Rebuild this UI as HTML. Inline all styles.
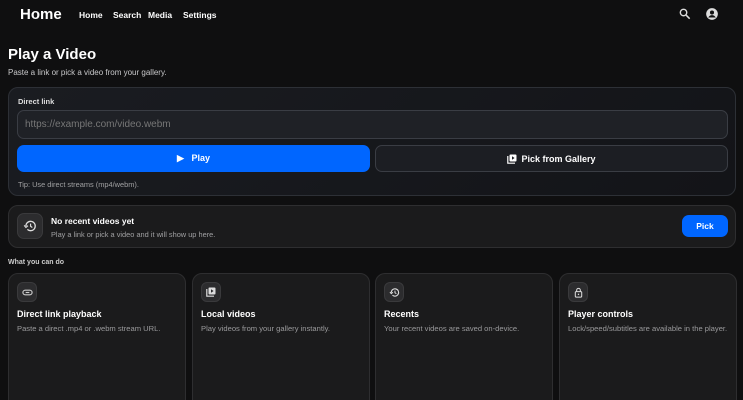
<!DOCTYPE html>
<html><head><meta charset="utf-8"><style>
*{box-sizing:border-box;margin:0;padding:0}
html,body{width:743px;height:400px;overflow:hidden}
body{background:#0f0f10;color:#fff;font-family:"Liberation Sans",sans-serif;position:relative}
.a{position:absolute}
.b{font-weight:bold}
.nav a{position:absolute;top:10px;font-size:8.5px;font-weight:bold;color:#fff}
.card{position:absolute;border:1px solid #2e2e30;border-radius:10px;background:#1b1b1c}
.ib{position:absolute;background:#2c2c2e;border:1px solid #3a3a3c;border-radius:7px;display:flex;align-items:center;justify-content:center}
.ft{position:absolute;top:273px;width:178px;height:140px}
.ft .ib{left:8px;top:8px;width:20px;height:20px;border-radius:6px}
.ft .t{position:absolute;left:8px;top:35px;font-size:9px;font-weight:bold}
.ft .d{position:absolute;left:8px;top:50px;font-size:7.6px;color:#9a9a9c}
</style></head><body>
<div class="a b" style="left:20px;top:6px;font-size:15px">Home</div>
<div class="nav"><a style="left:79px">Home</a><a style="left:113px">Search</a><a style="left:148px">Media</a><a style="left:183px">Settings</a></div>
<svg class="a" style="left:678px;top:7px" width="14" height="14" viewBox="0 0 24 24"><circle cx="9.5" cy="9.5" r="5.5" fill="none" stroke="#ddd" stroke-width="2.4"/><path d="M14 14l6 6" stroke="#ddd" stroke-width="2.6"/></svg>
<svg class="a" style="left:705px;top:7px" width="14" height="14" viewBox="0 0 24 24"><circle cx="12" cy="12" r="10" fill="#ddd"/><circle cx="12" cy="9.5" r="3.5" fill="#111"/><path d="M5.5 18c2-3 4-4 6.5-4s4.5 1 6.5 4" fill="#111"/></svg>
<div class="a b" style="left:8px;top:46px;font-size:15px">Play a Video</div>
<div class="a" style="left:8px;top:68px;font-size:8px;color:#c8c8ca">Paste a link or pick a video from your gallery.</div>
<div class="card" style="left:8px;top:87px;width:728px;height:109px;background:linear-gradient(135deg,#1a1c21,#131418);border-color:#2d3036">
<div class="a b" style="left:9px;top:9px;font-size:7.5px;color:#ddd">Direct link</div>
<div class="a" style="left:8px;top:22px;width:711px;height:29px;border:1px solid #3a3d44;border-radius:7px;background:#1f2126;font-size:10px;color:#777;padding:8px 7px">https://example.com/video.webm</div>
<div class="a b" style="left:8px;top:57px;width:353px;height:27px;border-radius:7px;background:#0066ff;font-size:9px;display:flex;align-items:center;justify-content:center">&#9654;&nbsp;&nbsp; Play</div>
<div class="a b" style="left:366px;top:57px;width:353px;height:27px;border-radius:7px;background:#1c1e23;border:1px solid #3a3d44;font-size:9px;display:flex;align-items:center;justify-content:center"><svg width="10" height="10" viewBox="0 0 10 10" style="margin-right:4px"><rect x="2.5" y="0.5" width="7" height="7" rx="1" fill="#fff"/><path d="M5 2.3v3.4l2.6-1.7z" fill="#1c1e23"/><path d="M0.8 2v7.2h7.2" stroke="#fff" stroke-width="1.2" fill="none"/></svg>Pick from Gallery</div>
<div class="a" style="left:9px;top:92px;font-size:7.4px;color:#a0a0a2">Tip: Use direct streams (mp4/webm).</div>
</div>
<div class="card" style="left:8px;top:205px;width:728px;height:43px">
<div class="ib" style="left:8px;top:7px;width:26px;height:26px"><svg width="14" height="14" viewBox="0 0 24 24"><path d="M5 12a8 8 0 1 1 2.5 5.8" fill="none" stroke="#ddd" stroke-width="2.2"/><path d="M2 11l3 3.5 3.5-3" fill="none" stroke="#ddd" stroke-width="2"/><path d="M13 8v4.5l3 2" fill="none" stroke="#ddd" stroke-width="2"/></svg></div>
<div class="a b" style="left:42px;top:10px;font-size:8.5px">No recent videos yet</div>
<div class="a" style="left:42px;top:24px;font-size:7.4px;color:#a0a0a2">Play a link or pick a video and it will show up here.</div>
<div class="a b" style="left:673px;top:9px;width:46px;height:22px;border-radius:7px;background:#0066ff;font-size:8.5px;display:flex;align-items:center;justify-content:center">Pick</div>
</div>
<div class="a b" style="left:8px;top:259px;font-size:7px;color:#ccc">What you can do</div>
<div class="card ft" style="left:8px"><div class="ib"><svg width="11" height="11" viewBox="0 0 24 24"><rect x="2" y="7" width="20" height="10" rx="5" fill="none" stroke="#ccc" stroke-width="2.5"/><path d="M8 12h8" stroke="#ccc" stroke-width="2.5"/></svg></div><div class="t">Direct link playback</div><div class="d">Paste a direct .mp4 or .webm stream URL.</div></div>
<div class="card ft" style="left:192px"><div class="ib"><svg width="10" height="10" viewBox="0 0 10 10"><rect x="2.5" y="0.5" width="7" height="7" rx="1" fill="#ddd"/><path d="M5 2.3v3.4l2.6-1.7z" fill="#2c2c2e"/><path d="M0.8 2v7.2h7.2" stroke="#ddd" stroke-width="1.2" fill="none"/></svg></div><div class="t">Local videos</div><div class="d">Play videos from your gallery instantly.</div></div>
<div class="card ft" style="left:375px"><div class="ib"><svg width="11" height="11" viewBox="0 0 24 24"><path d="M5 12a8 8 0 1 1 2.5 5.8" fill="none" stroke="#ddd" stroke-width="2.4"/><path d="M2 11l3 3.5 3.5-3" fill="none" stroke="#ddd" stroke-width="2.2"/><path d="M13 8v4.5l3 2" fill="none" stroke="#ddd" stroke-width="2.2"/></svg></div><div class="t">Recents</div><div class="d">Your recent videos are saved on-device.</div></div>
<div class="card ft" style="left:559px"><div class="ib"><svg width="11" height="11" viewBox="0 0 24 24"><rect x="5" y="10" width="14" height="12" rx="2" fill="none" stroke="#ddd" stroke-width="2.2"/><path d="M8 10V7a4 4 0 0 1 8 0v3" fill="none" stroke="#ddd" stroke-width="2.2"/><circle cx="12" cy="16" r="1.6" fill="#ddd"/></svg></div><div class="t">Player controls</div><div class="d">Lock/speed/subtitles are available in the player.</div></div>
</body></html>
